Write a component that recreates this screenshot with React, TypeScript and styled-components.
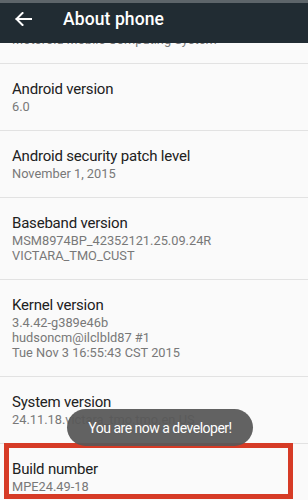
import React from "react";
import styled, { createGlobalStyle } from "styled-components";

const Global = createGlobalStyle`
  html, body { margin: 0; padding: 0; background: #fafafa; overflow: hidden; }
  * { box-sizing: border-box; }
`;

const Screen = styled.div`
  width: 308px;
  height: 500px;
  display: flex;
  flex-direction: column;
  overflow: hidden;
  position: relative;
  background: #fafafa;
  font-family: Roboto, "Noto Sans", sans-serif;
`;

const StatusStrip = styled.div`
  height: 3px;
  background: #5d656a;
  flex: none;
`;

const Toolbar = styled.header`
  height: 40px;
  flex: none;
  background: #212c33;
  display: flex;
  align-items: center;
  padding: 0 0 8px 15px;
  position: relative;
  z-index: 2;
`;

const BackButton = styled.span`
  display: flex;
  width: 17px;
  height: 14px;
  margin-right: 31px;
  color: #ffffff;
`;

const Title = styled.h1`
  margin: 0;
  color: #ffffff;
  font-size: 17.5px;
  line-height: 22px;
  font-weight: 500;
  letter-spacing: 0.1px;
`;

const Viewport = styled.div`
  flex: 1;
  overflow: hidden;
  position: relative;
`;

const List = styled.div<{ $offset: number }>`
  display: flex;
  flex-direction: column;
  margin-top: ${(p) => -p.$offset}px;
`;

const Row = styled.div`
  position: relative;
  display: flex;
  flex-direction: column;
  padding: 15px 12px 16px;
  border-bottom: 1px solid #e2e2e2;
  flex: none;
`;

const RowTitle = styled.div`
  min-height: 20px;
  font-size: 15px;
  line-height: 20px;
  letter-spacing: -0.2px;
  color: #212121;
`;

const RowValue = styled.div`
  font-size: 12.8px;
  line-height: 15px;
  color: #787878;
  white-space: nowrap;
`;

const Highlight = styled.div`
  position: absolute;
  left: 4px;
  top: -1px;
  width: 289px;
  height: 56px;
  border: 5px solid #d63b26;
  pointer-events: none;
`;

const Toast = styled.div`
  position: absolute;
  left: 67px;
  top: 409px;
  width: 186px;
  height: 37px;
  border-radius: 19px;
  background: rgba(88, 88, 88, 0.94);
  color: #ffffff;
  font-size: 14px;
  letter-spacing: -0.5px;
  display: flex;
  align-items: center;
  justify-content: center;
  z-index: 3;
`;

type Item = { id: string; title: string; values: string[]; highlight?: boolean };

const items: Item[] = [
  { id: "system", title: "", values: ["Motorola Mobile Computing System"] },
  { id: "android", title: "Android version", values: ["6.0"] },
  { id: "patch", title: "Android security patch level", values: ["November 1, 2015"] },
  {
    id: "baseband",
    title: "Baseband version",
    values: ["MSM8974BP_42352121.25.09.24R", "VICTARA_TMO_CUST"],
  },
  {
    id: "kernel",
    title: "Kernel version",
    values: ["3.4.42-g389e46b", "hudsoncm@ilclbld87 #1", "Tue Nov 3 16:55:43 CST 2015"],
  },
  { id: "sysver", title: "System version", values: ["24.11.18.victara_tmo.tmo.en.US"] },
  { id: "build", title: "Build number", values: ["MPE24.49-18"], highlight: true },
];

function BackArrow() {
  return (
    <svg width="17" height="14" viewBox="0 0 17 14" fill="none">
      <path
        d="M7.5 1 L1.5 7 L7.5 13 M1.5 7 H16.5"
        stroke="currentColor"
        strokeWidth="2"
        strokeLinecap="square"
        strokeLinejoin="miter"
      />
    </svg>
  );
}

export default function App() {
  return (
    <>
      <Global />
      <Screen>
        <StatusStrip />
        <Toolbar>
          <BackButton>
            <BackArrow />
          </BackButton>
          <Title>About phone</Title>
        </Toolbar>
        <Viewport>
          <List $offset={46}>
            {items.map((it) => (
              <Row key={it.id}>
                <RowTitle>{it.title}</RowTitle>
                {it.values.map((v) => (
                  <RowValue key={v}>{v}</RowValue>
                ))}
                {it.highlight && <Highlight />}
              </Row>
            ))}
          </List>
        </Viewport>
        <Toast>You are now a developer!</Toast>
      </Screen>
    </>
  );
}
